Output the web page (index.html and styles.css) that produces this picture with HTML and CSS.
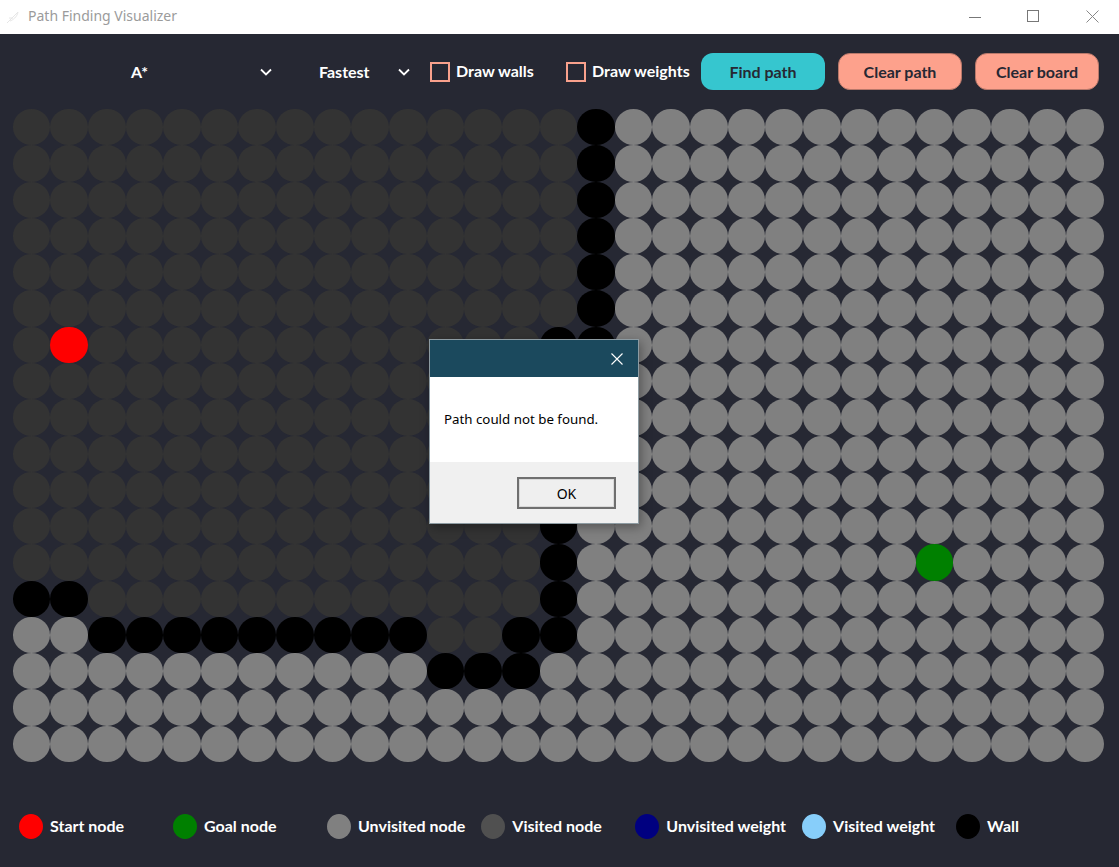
FILE: index.html
```html
<!DOCTYPE html>
<html>
<head>
<meta charset="utf-8">
<title>Path Finding Visualizer</title>
<link rel="stylesheet" href="styles.css">
</head>
<body>
<div class="titlebar">
  <svg class="app-icon" viewBox="0 0 16 16" width="16" height="16"><path d="M2 14 L13 3 M5 12 C8 11 12 8 13 3 M4 9 L8 9" stroke="#e6e6e6" stroke-width="1" fill="none"/></svg>
  <span class="title">Path Finding Visualizer</span>
  <div class="controls">
    <svg class="ctl ctl-min" viewBox="0 0 12 12" width="12" height="12"><path d="M0 6.5 H12" stroke="#777" stroke-width="1"/></svg>
    <svg class="ctl ctl-max" viewBox="0 0 12 12" width="12" height="12"><rect x="0.5" y="0.5" width="11" height="11" stroke="#777" stroke-width="1" fill="none"/></svg>
    <svg class="ctl ctl-close" viewBox="0 0 13 13" width="13" height="13"><path d="M0.5 0.5 L12.5 12.5 M12.5 0.5 L0.5 12.5" stroke="#888" stroke-width="1" fill="none"/></svg>
  </div>
</div>

<div class="toolbar">
  <div class="select select-algo"><span>A*</span><svg class="chev" viewBox="0 0 12 8" width="12" height="8"><path d="M1 1.5 L6 6.5 L11 1.5" stroke="#fff" stroke-width="1.8" fill="none"/></svg></div>
  <div class="select select-speed"><span>Fastest</span><svg class="chev" viewBox="0 0 12 8" width="12" height="8"><path d="M1 1.5 L6 6.5 L11 1.5" stroke="#fff" stroke-width="1.8" fill="none"/></svg></div>
  <label class="check check-walls"><span class="box"></span><span>Draw walls</span></label>
  <label class="check check-weights"><span class="box"></span><span>Draw weights</span></label>
  <div class="btn btn-find">Find path</div>
  <div class="btn btn-clear">Clear path</div>
  <div class="btn btn-clear">Clear board</div>
</div>

<div class="board">
  <div class="grid">
<i class="d"></i><i class="d"></i><i class="d"></i><i class="d"></i><i class="d"></i><i class="d"></i><i class="d"></i><i class="d"></i><i class="d"></i><i class="d"></i><i class="d"></i><i class="d"></i><i class="d"></i><i class="d"></i><i class="d"></i><i class="w"></i><i class="u"></i><i class="u"></i><i class="u"></i><i class="u"></i><i class="u"></i><i class="u"></i><i class="u"></i><i class="u"></i><i class="u"></i><i class="u"></i><i class="u"></i><i class="u"></i><i class="u"></i>
<i class="d"></i><i class="d"></i><i class="d"></i><i class="d"></i><i class="d"></i><i class="d"></i><i class="d"></i><i class="d"></i><i class="d"></i><i class="d"></i><i class="d"></i><i class="d"></i><i class="d"></i><i class="d"></i><i class="d"></i><i class="w"></i><i class="u"></i><i class="u"></i><i class="u"></i><i class="u"></i><i class="u"></i><i class="u"></i><i class="u"></i><i class="u"></i><i class="u"></i><i class="u"></i><i class="u"></i><i class="u"></i><i class="u"></i>
<i class="d"></i><i class="d"></i><i class="d"></i><i class="d"></i><i class="d"></i><i class="d"></i><i class="d"></i><i class="d"></i><i class="d"></i><i class="d"></i><i class="d"></i><i class="d"></i><i class="d"></i><i class="d"></i><i class="d"></i><i class="w"></i><i class="u"></i><i class="u"></i><i class="u"></i><i class="u"></i><i class="u"></i><i class="u"></i><i class="u"></i><i class="u"></i><i class="u"></i><i class="u"></i><i class="u"></i><i class="u"></i><i class="u"></i>
<i class="d"></i><i class="d"></i><i class="d"></i><i class="d"></i><i class="d"></i><i class="d"></i><i class="d"></i><i class="d"></i><i class="d"></i><i class="d"></i><i class="d"></i><i class="d"></i><i class="d"></i><i class="d"></i><i class="d"></i><i class="w"></i><i class="u"></i><i class="u"></i><i class="u"></i><i class="u"></i><i class="u"></i><i class="u"></i><i class="u"></i><i class="u"></i><i class="u"></i><i class="u"></i><i class="u"></i><i class="u"></i><i class="u"></i>
<i class="d"></i><i class="d"></i><i class="d"></i><i class="d"></i><i class="d"></i><i class="d"></i><i class="d"></i><i class="d"></i><i class="d"></i><i class="d"></i><i class="d"></i><i class="d"></i><i class="d"></i><i class="d"></i><i class="d"></i><i class="w"></i><i class="u"></i><i class="u"></i><i class="u"></i><i class="u"></i><i class="u"></i><i class="u"></i><i class="u"></i><i class="u"></i><i class="u"></i><i class="u"></i><i class="u"></i><i class="u"></i><i class="u"></i>
<i class="d"></i><i class="d"></i><i class="d"></i><i class="d"></i><i class="d"></i><i class="d"></i><i class="d"></i><i class="d"></i><i class="d"></i><i class="d"></i><i class="d"></i><i class="d"></i><i class="d"></i><i class="d"></i><i class="d"></i><i class="w"></i><i class="u"></i><i class="u"></i><i class="u"></i><i class="u"></i><i class="u"></i><i class="u"></i><i class="u"></i><i class="u"></i><i class="u"></i><i class="u"></i><i class="u"></i><i class="u"></i><i class="u"></i>
<i class="d"></i><i class="s"></i><i class="d"></i><i class="d"></i><i class="d"></i><i class="d"></i><i class="d"></i><i class="d"></i><i class="d"></i><i class="d"></i><i class="d"></i><i class="d"></i><i class="d"></i><i class="d"></i><i class="w"></i><i class="w"></i><i class="u"></i><i class="u"></i><i class="u"></i><i class="u"></i><i class="u"></i><i class="u"></i><i class="u"></i><i class="u"></i><i class="u"></i><i class="u"></i><i class="u"></i><i class="u"></i><i class="u"></i>
<i class="d"></i><i class="d"></i><i class="d"></i><i class="d"></i><i class="d"></i><i class="d"></i><i class="d"></i><i class="d"></i><i class="d"></i><i class="d"></i><i class="d"></i><i class="d"></i><i class="d"></i><i class="d"></i><i class="w"></i><i class="u"></i><i class="u"></i><i class="u"></i><i class="u"></i><i class="u"></i><i class="u"></i><i class="u"></i><i class="u"></i><i class="u"></i><i class="u"></i><i class="u"></i><i class="u"></i><i class="u"></i><i class="u"></i>
<i class="d"></i><i class="d"></i><i class="d"></i><i class="d"></i><i class="d"></i><i class="d"></i><i class="d"></i><i class="d"></i><i class="d"></i><i class="d"></i><i class="d"></i><i class="d"></i><i class="d"></i><i class="d"></i><i class="w"></i><i class="u"></i><i class="u"></i><i class="u"></i><i class="u"></i><i class="u"></i><i class="u"></i><i class="u"></i><i class="u"></i><i class="u"></i><i class="u"></i><i class="u"></i><i class="u"></i><i class="u"></i><i class="u"></i>
<i class="d"></i><i class="d"></i><i class="d"></i><i class="d"></i><i class="d"></i><i class="d"></i><i class="d"></i><i class="d"></i><i class="d"></i><i class="d"></i><i class="d"></i><i class="d"></i><i class="d"></i><i class="d"></i><i class="w"></i><i class="u"></i><i class="u"></i><i class="u"></i><i class="u"></i><i class="u"></i><i class="u"></i><i class="u"></i><i class="u"></i><i class="u"></i><i class="u"></i><i class="u"></i><i class="u"></i><i class="u"></i><i class="u"></i>
<i class="d"></i><i class="d"></i><i class="d"></i><i class="d"></i><i class="d"></i><i class="d"></i><i class="d"></i><i class="d"></i><i class="d"></i><i class="d"></i><i class="d"></i><i class="d"></i><i class="d"></i><i class="d"></i><i class="w"></i><i class="u"></i><i class="u"></i><i class="u"></i><i class="u"></i><i class="u"></i><i class="u"></i><i class="u"></i><i class="u"></i><i class="u"></i><i class="u"></i><i class="u"></i><i class="u"></i><i class="u"></i><i class="u"></i>
<i class="d"></i><i class="d"></i><i class="d"></i><i class="d"></i><i class="d"></i><i class="d"></i><i class="d"></i><i class="d"></i><i class="d"></i><i class="d"></i><i class="d"></i><i class="d"></i><i class="d"></i><i class="d"></i><i class="w"></i><i class="u"></i><i class="u"></i><i class="u"></i><i class="u"></i><i class="u"></i><i class="u"></i><i class="u"></i><i class="u"></i><i class="u"></i><i class="u"></i><i class="u"></i><i class="u"></i><i class="u"></i><i class="u"></i>
<i class="d"></i><i class="d"></i><i class="d"></i><i class="d"></i><i class="d"></i><i class="d"></i><i class="d"></i><i class="d"></i><i class="d"></i><i class="d"></i><i class="d"></i><i class="d"></i><i class="d"></i><i class="d"></i><i class="w"></i><i class="u"></i><i class="u"></i><i class="u"></i><i class="u"></i><i class="u"></i><i class="u"></i><i class="u"></i><i class="u"></i><i class="u"></i><i class="g"></i><i class="u"></i><i class="u"></i><i class="u"></i><i class="u"></i>
<i class="w"></i><i class="w"></i><i class="d"></i><i class="d"></i><i class="d"></i><i class="d"></i><i class="d"></i><i class="d"></i><i class="d"></i><i class="d"></i><i class="d"></i><i class="d"></i><i class="d"></i><i class="d"></i><i class="w"></i><i class="u"></i><i class="u"></i><i class="u"></i><i class="u"></i><i class="u"></i><i class="u"></i><i class="u"></i><i class="u"></i><i class="u"></i><i class="u"></i><i class="u"></i><i class="u"></i><i class="u"></i><i class="u"></i>
<i class="u"></i><i class="u"></i><i class="w"></i><i class="w"></i><i class="w"></i><i class="w"></i><i class="w"></i><i class="w"></i><i class="w"></i><i class="w"></i><i class="w"></i><i class="d"></i><i class="d"></i><i class="w"></i><i class="w"></i><i class="u"></i><i class="u"></i><i class="u"></i><i class="u"></i><i class="u"></i><i class="u"></i><i class="u"></i><i class="u"></i><i class="u"></i><i class="u"></i><i class="u"></i><i class="u"></i><i class="u"></i><i class="u"></i>
<i class="u"></i><i class="u"></i><i class="u"></i><i class="u"></i><i class="u"></i><i class="u"></i><i class="u"></i><i class="u"></i><i class="u"></i><i class="u"></i><i class="u"></i><i class="w"></i><i class="w"></i><i class="w"></i><i class="u"></i><i class="u"></i><i class="u"></i><i class="u"></i><i class="u"></i><i class="u"></i><i class="u"></i><i class="u"></i><i class="u"></i><i class="u"></i><i class="u"></i><i class="u"></i><i class="u"></i><i class="u"></i><i class="u"></i>
<i class="u"></i><i class="u"></i><i class="u"></i><i class="u"></i><i class="u"></i><i class="u"></i><i class="u"></i><i class="u"></i><i class="u"></i><i class="u"></i><i class="u"></i><i class="u"></i><i class="u"></i><i class="u"></i><i class="u"></i><i class="u"></i><i class="u"></i><i class="u"></i><i class="u"></i><i class="u"></i><i class="u"></i><i class="u"></i><i class="u"></i><i class="u"></i><i class="u"></i><i class="u"></i><i class="u"></i><i class="u"></i><i class="u"></i>
<i class="u"></i><i class="u"></i><i class="u"></i><i class="u"></i><i class="u"></i><i class="u"></i><i class="u"></i><i class="u"></i><i class="u"></i><i class="u"></i><i class="u"></i><i class="u"></i><i class="u"></i><i class="u"></i><i class="u"></i><i class="u"></i><i class="u"></i><i class="u"></i><i class="u"></i><i class="u"></i><i class="u"></i><i class="u"></i><i class="u"></i><i class="u"></i><i class="u"></i><i class="u"></i><i class="u"></i><i class="u"></i><i class="u"></i>
  </div>

  <div class="dialog">
    <div class="dialog-head">
      <svg class="dialog-x" viewBox="0 0 12 12" width="12" height="12"><path d="M0.5 0.5 L11.5 11.5 M11.5 0.5 L0.5 11.5" stroke="#fff" stroke-width="1.1" fill="none"/></svg>
    </div>
    <div class="dialog-body">Path could not be found.</div>
    <div class="dialog-foot"><div class="ok">OK</div></div>
  </div>
</div>

<div class="legend">
  <div class="item"><span class="dot dot-start"></span><span>Start node</span></div>
  <div class="item"><span class="dot dot-goal"></span><span>Goal node</span></div>
  <div class="item"><span class="dot dot-unvisited"></span><span>Unvisited node</span></div>
  <div class="item"><span class="dot dot-visited"></span><span>Visited node</span></div>
  <div class="item"><span class="dot dot-uweight"></span><span>Unvisited weight</span></div>
  <div class="item"><span class="dot dot-vweight"></span><span>Visited weight</span></div>
  <div class="item"><span class="dot dot-wall"></span><span>Wall</span></div>
</div>
</body>
</html>
```

FILE: styles.css
```css
* { box-sizing: border-box; }
html, body { margin: 0; padding: 0; }
body {
  width: 1119px;
  height: 867px;
  overflow: hidden;
  background: #262833;
  font-family: Lato, "Noto Sans", sans-serif;
}

/* window title bar */
.titlebar {
  height: 34px;
  background: #ffffff;
  display: flex;
  align-items: center;
}
.app-icon { margin-left: 5px; flex: none; }
.title {
  margin-left: 7px;
  font-family: "Noto Sans", sans-serif;
  font-size: 14px;
  color: #9b9b9b;
  line-height: 1;
  position: relative;
  top: -1px;
}
.controls {
  margin-left: auto;
  display: flex;
  align-items: center;
  padding-right: 20px;
}
.ctl { display: block; flex: none; }
.ctl-min { margin-right: 46px; position: relative; top: 0px; }
.ctl-max { margin-right: 47px; position: relative; top: -1px; }
.ctl-close { position: relative; top: -1px; }

/* toolbar */
.toolbar {
  height: 75px;
  display: flex;
  align-items: center;
  padding-left: 120px;
  color: #ffffff;
  font-weight: 700;
  font-size: 16px;
}
.select {
  display: flex;
  align-items: center;
  justify-content: space-between;
  padding: 0 8px 0 11px;
  height: 37px;
}
.select-algo { width: 160px; }
.select-speed { width: 110px; margin-left: 28px; }
.chev { display: block; }
.check {
  display: flex;
  align-items: center;
  gap: 6px;
  height: 37px;
}
.check span:last-child { position: relative; top: -1px; }
.check-walls { width: 136px; margin-left: 12px; }
.check-weights { width: 135px; }
.box {
  width: 20px;
  height: 20px;
  border: 2px solid #f9a18c;
  flex: none;
}
.btn {
  width: 124px;
  height: 37px;
  border-radius: 12px;
  display: flex;
  align-items: center;
  justify-content: center;
  color: #262833;
  font-size: 16px;
  font-weight: 700;
}
.btn-find { background: #36c6cf; }
.btn-clear {
  background: #fda18c;
  border: 1px solid #b8786a;
  margin-left: 13px;
}

/* board */
.board { position: relative; height: 653px; }
.grid {
  margin-left: 12.7px;
  width: 1091.3px;
  height: 653px;
  display: grid;
  grid-template-columns: repeat(29, 1fr);
  grid-template-rows: repeat(18, 1fr);
}
.grid i { border-radius: 50%; display: block; }
.grid .d { background: #333333; }
.grid .u { background: #808080; }
.grid .w { background: #000000; }
.grid .s { background: #ff0000; }
.grid .g { background: #008000; }

/* dialog */
.dialog {
  position: absolute;
  left: 429px;
  top: 230px;
  width: 210px;
  height: 185px;
  border: 1px solid #8d9ba2;
  background: #ffffff;
  box-shadow: 2px 3px 10px rgba(0,0,0,0.35);
  display: flex;
  flex-direction: column;
  font-family: "Noto Sans", sans-serif;
}
.dialog-head {
  height: 37px;
  background: #1b495d;
  display: flex;
  align-items: center;
  justify-content: flex-end;
  padding-right: 15px;
}
.dialog-x { display: block; }
.dialog-body {
  height: 85px;
  padding: 34px 0 0 14px;
  font-size: 13.3px;
  line-height: 16px;
  color: #000;
}
.dialog-foot {
  flex: 1;
  background: #f0f0f0;
  display: flex;
  justify-content: flex-end;
  align-items: flex-start;
  padding: 15px 22px 0 0;
}
.ok {
  width: 99px;
  height: 32px;
  border: 2px solid #6f6f6f;
  background: #efefef;
  box-shadow: inset 0 0 0 1px #d9d9d9;
  display: flex;
  align-items: center;
  justify-content: center;
  font-size: 14px;
  color: #000;
}

/* legend */
.legend {
  display: flex;
  padding: 52px 0 0 19px;
  color: #ffffff;
  font-weight: 700;
  font-size: 16px;
}
.item {
  display: flex;
  align-items: center;
  gap: 7px;
  min-width: 154px;
  padding-right: 16px;
}
.item span:last-child { position: relative; top: -1px; }
.dot {
  width: 24px;
  height: 25px;
  border-radius: 50%;
  flex: none;
}
.dot-start { background: #ff0000; }
.dot-goal { background: #008000; }
.dot-unvisited { background: #808080; }
.dot-visited { background: #505050; }
.dot-uweight { background: #000080; }
.dot-vweight { background: #87cefa; }
.dot-wall { background: #000000; }
```
